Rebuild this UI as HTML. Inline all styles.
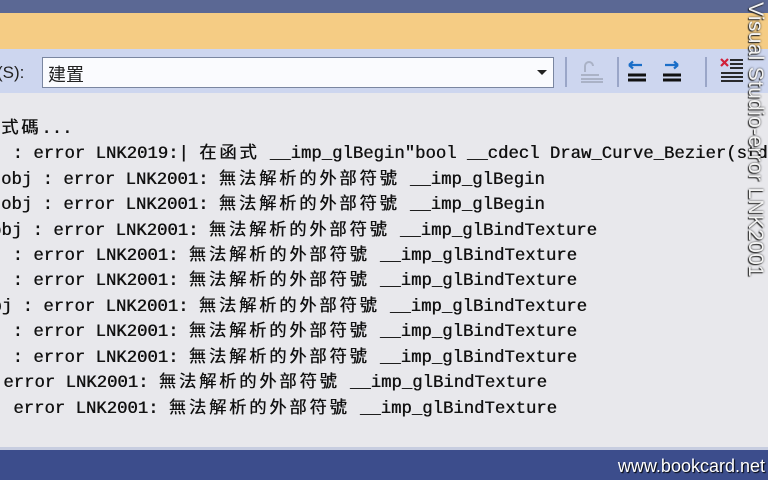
<!DOCTYPE html>
<html><head><meta charset="utf-8"><style>
*{margin:0;padding:0;box-sizing:border-box}
body{width:768px;height:480px;overflow:hidden;position:relative;background:#e8e8ec;font-family:"Liberation Mono","Noto Sans CJK TC",monospace}
.top{position:absolute;left:0;top:0;width:768px;height:13px;background:#5b6894}
.yel{position:absolute;left:0;top:13px;width:768px;height:36px;background:#f5cc84}
.tb{position:absolute;left:0;top:49px;width:768px;height:44px;background:#cdd6ef}
.lbl{position:absolute;left:-3px;top:63px;font:17px "Liberation Sans",sans-serif;color:#222}
.combo{position:absolute;left:42px;top:57px;width:512px;height:31px;background:#fafbfe;border:1px solid #7a86a0}
.combo span{position:absolute;left:5px;top:3px;font:18px "Liberation Sans","Noto Sans CJK TC",sans-serif;color:#222}
.arr{position:absolute;right:6px;top:12px;width:0;height:0;border-left:5px solid transparent;border-right:5px solid transparent;border-top:5px solid #222}
.sep{position:absolute;top:57px;width:2px;height:30px;background:#9aa6c8}
.out{position:absolute;left:0;top:93px;width:768px;height:354px;background:#e8e8ec}
.ln{position:absolute;font-size:17.3px;line-height:25.4px;white-space:pre;color:#111;text-shadow:0.4px 0 0 #111}
.c{font-family:"Noto Sans CJK TC",sans-serif;letter-spacing:2.8px}
.bot1{position:absolute;left:0;top:447px;width:768px;height:3px;background:#c7cde0}
.bot{position:absolute;left:0;top:450px;width:768px;height:30px;background:#3c4d8c}
.url{position:absolute;right:3px;top:456px;font:18px "Liberation Sans",sans-serif;color:#fff;text-shadow:1px 1px 1px #000}
.wm{position:absolute;left:767px;top:2px;transform-origin:0 0;transform:rotate(90deg);font:21px "Liberation Sans",sans-serif;color:#f4f4f4;white-space:nowrap;text-shadow:0 0 2px #333,1px 1px 1px #222;letter-spacing:0.3px}
</style></head><body>
<div class="top"></div><div class="yel"></div>
<div class="tb"></div>
<div class="lbl">(S):</div>
<div class="combo"><span>建置</span><div class="arr"></div></div>
<div class="sep" style="left:565px"></div>
<div class="sep" style="left:617px"></div>
<div class="sep" style="left:705px"></div>
<svg style="position:absolute;left:575px;top:56px" width="34" height="32"><path d="M10 16v-6a4 4 0 0 1 8 0M6 19h18M6 23h22M6 26h22" stroke="#aab2c6" stroke-width="2" fill="none"/></svg>
<svg style="position:absolute;left:625px;top:56px" width="72" height="32"><path d="M4 9h13M4 9l4-3.5M4 9l4 3.5" stroke="#1a6ec8" stroke-width="2.2" fill="none"/><path d="M3 19h18M3 24h18" stroke="#111" stroke-width="3"/><path d="M40 9h13M53 9l-4-3.5M53 9l-4 3.5" stroke="#1a6ec8" stroke-width="2.2" fill="none"/><path d="M38 19h18M38 24h18" stroke="#111" stroke-width="3"/></svg>
<svg style="position:absolute;left:718px;top:55px" width="30" height="32"><path d="M3 4l7 7M10 4l-7 7" stroke="#d0203a" stroke-width="2.2"/><path d="M12 5h13M12 9h13M12 13h13M3 18h22M3 22h22M3 26h22" stroke="#111" stroke-width="1.8"/></svg>
<div class="out"></div>
<div class="ln" style="left:-19px;top:113px"><span class="c">程式碼</span>...</div>
<div class="ln" style="left:-29px;top:138px">obj : error LNK2019:| <span class="c">在函式</span> __imp_glBegin"bool __cdecl Draw_Curve_Bezier(stdcall</div>
<div class="ln" style="left:1px;top:164px">obj : error LNK2001: <span class="c">無法解析的外部符號</span> __imp_glBegin</div>
<div class="ln" style="left:1px;top:189px">obj : error LNK2001: <span class="c">無法解析的外部符號</span> __imp_glBegin</div>
<div class="ln" style="left:-9px;top:215px">obj : error LNK2001: <span class="c">無法解析的外部符號</span> __imp_glBindTexture</div>
<div class="ln" style="left:-29px;top:240px">obj : error LNK2001: <span class="c">無法解析的外部符號</span> __imp_glBindTexture</div>
<div class="ln" style="left:-29px;top:265px">obj : error LNK2001: <span class="c">無法解析的外部符號</span> __imp_glBindTexture</div>
<div class="ln" style="left:-19px;top:291px">obj : error LNK2001: <span class="c">無法解析的外部符號</span> __imp_glBindTexture</div>
<div class="ln" style="left:-29px;top:316px">obj : error LNK2001: <span class="c">無法解析的外部符號</span> __imp_glBindTexture</div>
<div class="ln" style="left:-29px;top:342px">obj : error LNK2001: <span class="c">無法解析的外部符號</span> __imp_glBindTexture</div>
<div class="ln" style="left:-59px;top:367px">obj : error LNK2001: <span class="c">無法解析的外部符號</span> __imp_glBindTexture</div>
<div class="ln" style="left:-49px;top:393px">obj : error LNK2001: <span class="c">無法解析的外部符號</span> __imp_glBindTexture</div>
<div class="bot1"></div><div class="bot"></div>
<div class="url">www.bookcard.net</div>
<div class="wm">Visual Studio-error LNK2001</div>
</body></html>
